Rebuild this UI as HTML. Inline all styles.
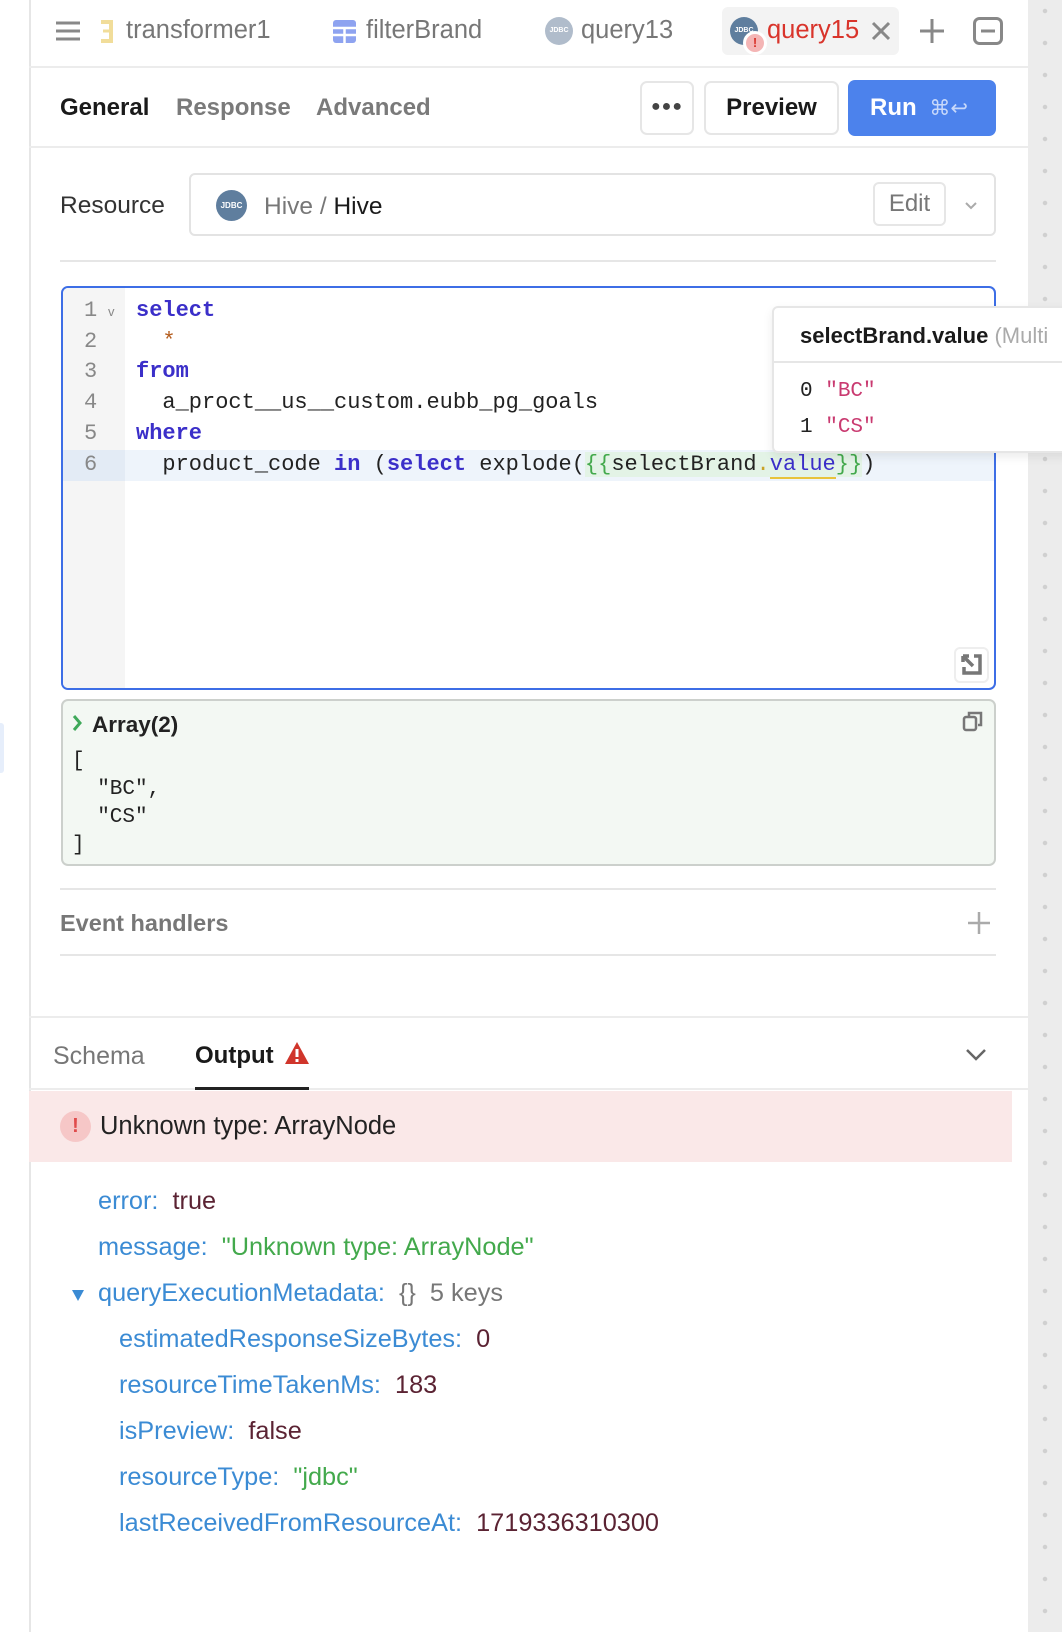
<!DOCTYPE html>
<html><head><meta charset="utf-8"><style>
*{box-sizing:border-box;margin:0;padding:0}
body{width:1062px;height:1632px;position:relative;background:#fff;font-family:"Liberation Sans",Arial,sans-serif;overflow:hidden;color:#222}
.a{position:absolute;white-space:nowrap}
.mono{font-family:"Liberation Mono",monospace;white-space:pre}
.strip{position:absolute;left:1028px;top:0;width:34px;height:1632px;background:#ececec;background-image:radial-gradient(circle,#d0d0d0 2px,transparent 2.5px);background-size:34px 32px;background-position:0 -5px}
.hl{position:absolute;left:29px;width:999px;height:2px;background:#ececec}
.kw{color:#3b2fc9;font-weight:bold}
.key{color:#3b8bd4}
.val{color:#5b2333}
.str{color:#43a94c}
.j{font-size:25.3px}
</style></head><body>
<div class="a" style="left:29px;top:0;width:2px;height:1632px;background:#e6e6e6"></div>
<div class="a" style="left:0;top:723px;width:4px;height:50px;background:#e6eefb;border-radius:0 3px 3px 0"></div>
<div class="strip"></div>

<!-- tab bar -->
<svg class="a" style="left:55px;top:20px" width="26" height="22"><g stroke="#888" stroke-width="3"><line x1="1" y1="3" x2="25" y2="3"/><line x1="1" y1="11" x2="25" y2="11"/><line x1="1" y1="19" x2="25" y2="19"/></g></svg>
<svg class="a" style="left:99px;top:19px" width="16" height="25"><path d="M2 3h10v19H2" fill="none" stroke="#f1dd9a" stroke-width="4"/><path d="M4 12h6" stroke="#f1dd9a" stroke-width="3"/></svg>
<div class="a" style="left:126px;top:16px;font-size:25.5px;color:#777">transformer1</div>
<svg class="a" style="left:332px;top:19px" width="25" height="25"><rect x="1" y="1" width="23" height="23" rx="3" fill="#8ea3f0"/><g stroke="#fff" stroke-width="2.5"><line x1="1" y1="9" x2="24" y2="9"/><line x1="1" y1="16" x2="24" y2="16"/><line x1="12.5" y1="9" x2="12.5" y2="24"/></g></svg>
<div class="a" style="left:366px;top:16px;font-size:25.5px;color:#777">filterBrand</div>
<div class="a" style="left:545px;top:17px;width:28px;height:28px;border-radius:50%;background:#b0bccb;color:#fff;font-size:7px;text-align:center;line-height:28px;font-weight:bold">JDBC</div>
<div class="a" style="left:581px;top:16px;font-size:25.5px;color:#777">query13</div>
<div class="a" style="left:722px;top:7px;width:177px;height:48px;background:#f3f3f3;border-radius:6px"></div>
<div class="a" style="left:730px;top:17px;width:28px;height:28px;border-radius:50%;background:#5f7e9e;color:#fff;font-size:7px;line-height:28px;text-align:center;font-weight:bold">JDBC</div>
<div class="a" style="left:743px;top:31px;width:24px;height:24px;border-radius:50%;background:#f4b5b5;border:3px solid #fff;color:#d9342b;font-size:13px;font-weight:bold;text-align:center;line-height:18px">!</div>
<div class="a" style="left:767px;top:16px;font-size:25.5px;color:#d9342b">query15</div>
<svg class="a" style="left:871px;top:21px" width="20" height="20"><g stroke="#888" stroke-width="3"><line x1="2" y1="2" x2="18" y2="18"/><line x1="18" y1="2" x2="2" y2="18"/></g></svg>
<svg class="a" style="left:919px;top:18px" width="26" height="26"><g stroke="#888" stroke-width="3"><line x1="13" y1="1" x2="13" y2="25"/><line x1="1" y1="13" x2="25" y2="13"/></g></svg>
<svg class="a" style="left:973px;top:17px" width="30" height="28"><rect x="1.5" y="1.5" width="27" height="25" rx="5" fill="none" stroke="#888" stroke-width="3"/><line x1="8" y1="14" x2="22" y2="14" stroke="#888" stroke-width="3"/></svg>
<div class="hl" style="top:66px"></div>

<!-- toolbar -->
<div class="a" style="left:60px;top:94px;font-size:24px;font-weight:bold;color:#1a1a1a">General</div>
<div class="a" style="left:176px;top:94px;font-size:24px;font-weight:bold;color:#7a7a7a">Response</div>
<div class="a" style="left:316px;top:94px;font-size:24px;font-weight:bold;color:#7a7a7a">Advanced</div>
<div class="a" style="left:640px;top:81px;width:54px;height:54px;border:2px solid #e6e6e6;border-radius:7px;text-align:center;line-height:48px;font-size:16px;color:#444;letter-spacing:1px">●●●</div>
<div class="a" style="left:704px;top:81px;width:135px;height:54px;border:2px solid #e6e6e6;border-radius:7px;text-align:center;line-height:50px;font-size:24px;font-weight:bold;color:#1a1a1a">Preview</div>
<div class="a" style="left:848px;top:80px;width:148px;height:56px;background:#4c82ec;border-radius:7px;color:#fff;font-size:24px;font-weight:bold;line-height:56px;padding-left:22px">Run <span style="color:#c7d8fa;font-weight:normal;font-size:21px;margin-left:6px">⌘↩</span></div>
<div class="hl" style="top:146px"></div>

<!-- resource -->
<div class="a" style="left:60px;top:192px;font-size:24.5px;color:#333">Resource</div>
<div class="a" style="left:189px;top:173px;width:807px;height:63px;border:2px solid #e3e3e3;border-radius:6px"></div>
<div class="a" style="left:216px;top:190px;width:31px;height:31px;border-radius:50%;background:#5f7e9e;color:#fff;font-size:8px;line-height:31px;text-align:center;font-weight:bold">JDBC</div>
<div class="a" style="left:264px;top:193px;font-size:24.5px;color:#777">Hive / <span style="color:#1a1a1a">Hive</span></div>
<div class="a" style="left:873px;top:182px;width:73px;height:44px;border:2px solid #e6e6e6;border-radius:6px;text-align:center;line-height:40px;font-size:24px;color:#777">Edit</div>
<svg class="a" style="left:964px;top:201px" width="14" height="10"><path d="M2 2l5 5 5-5" fill="none" stroke="#aaa" stroke-width="2"/></svg>
<div class="a" style="left:60px;top:260px;width:936px;height:2px;background:#e6e6e6"></div>

<!-- editor -->
<div class="a" style="left:61px;top:286px;width:935px;height:404px;border:2px solid #3d6ee6;border-radius:7px;overflow:hidden">
  <div class="a" style="left:0;top:0;width:62px;height:400px;background:#f5f5f5"></div>
  <div class="a" style="left:0;top:162px;width:931px;height:31px;background:#eef4fb"></div>
  <div class="a" style="left:0;top:162px;width:62px;height:31px;background:#e3ebf5"></div>
</div>
<div class="a mono" style="left:84px;top:296px;font-size:22px;line-height:30.7px;color:#888">1
2
3
4
5
6</div>
<div class="a" style="left:108px;top:304px;font-size:13px;color:#888">v</div>
<div class="a mono" style="left:136px;top:296px;font-size:22px;line-height:30.7px;color:#222"><span class="kw">select</span>
  <span style="color:#b35c1e">*</span>
<span class="kw">from</span>
  a_proct__us__custom.eubb_pg_goals
<span class="kw">where</span>
  product_code <span class="kw">in</span> (<span class="kw">select</span> explode(<span style="background:#e3f3e6"><span class="str">{{</span>selectBrand<span style="color:#c9a227">.</span><span style="color:#3b2fc9;border-bottom:2px solid #e8c33a">value</span><span class="str">}}</span></span>)</div>
<div class="a" style="left:954px;top:647px;width:35px;height:36px;border:2px solid #eee;border-radius:6px;background:#fff"></div>
<svg class="a" style="left:960px;top:653px" width="24" height="24"><path d="M14 3h6v17H4v-6" fill="none" stroke="#777" stroke-width="3.5"/><path d="M3 3l10 10M3 3h6M3 3v6" fill="none" stroke="#777" stroke-width="3.5"/></svg>

<!-- popup -->
<div class="a" style="left:772px;top:306px;width:300px;height:147px;background:#fff;border:2px solid #e6e6e6;border-radius:6px;box-shadow:0 4px 10px rgba(0,0,0,.08)"></div>
<div class="a" style="left:772px;top:361px;width:290px;height:2px;background:#e6e6e6"></div>
<div class="a" style="left:800px;top:323px;font-size:22px;font-weight:bold;color:#1a1a1a">selectBrand.value <span style="font-weight:normal;color:#aaa">(Multi</span></div>
<div class="a mono" style="left:800px;top:374px;font-size:21px;line-height:36px;color:#222">0 <span style="color:#c93a70">"BC"</span>
1 <span style="color:#c93a70">"CS"</span></div>

<!-- array box -->
<div class="a" style="left:61px;top:699px;width:935px;height:167px;background:#f3f8f3;border:2px solid #ccd0cc;border-radius:7px"></div>
<svg class="a" style="left:71px;top:714px" width="12" height="18"><path d="M3 2l6 7-6 7" fill="none" stroke="#3fa95a" stroke-width="3"/></svg>
<div class="a" style="left:92px;top:712px;font-size:22.5px;font-weight:bold;color:#222">Array(2)</div>
<svg class="a" style="left:962px;top:710px" width="22" height="22"><rect x="2" y="7" width="12" height="13" rx="2" fill="none" stroke="#777" stroke-width="2.5"/><path d="M7 6V3h12v12h-3" fill="none" stroke="#777" stroke-width="2.5"/></svg>
<div class="a mono" style="left:72px;top:748px;font-size:21px;line-height:28px;color:#222">[
  "BC",
  "CS"
]</div>

<!-- event handlers -->
<div class="a" style="left:60px;top:888px;width:936px;height:2px;background:#e6e6e6"></div>
<div class="a" style="left:60px;top:910px;font-size:23.5px;font-weight:bold;color:#777">Event handlers</div>
<svg class="a" style="left:967px;top:911px" width="24" height="24"><g stroke="#aaa" stroke-width="2.5"><line x1="12" y1="1" x2="12" y2="23"/><line x1="1" y1="12" x2="23" y2="12"/></g></svg>
<div class="a" style="left:60px;top:954px;width:936px;height:2px;background:#e6e6e6"></div>

<!-- bottom -->
<div class="hl" style="top:1016px"></div>
<div class="a" style="left:53px;top:1042px;font-size:25px;color:#777">Schema</div>
<div class="a" style="left:195px;top:1042px;font-size:24px;font-weight:bold;color:#1a1a1a">Output</div>
<svg class="a" style="left:284px;top:1041px" width="26" height="24"><path d="M13 1L25 23H1z" fill="#d0352b"/><rect x="11.5" y="8" width="3" height="8" fill="#fff"/><rect x="11.5" y="18" width="3" height="3" fill="#fff"/></svg>
<svg class="a" style="left:965px;top:1048px" width="22" height="14"><path d="M2 2l9 9 9-9" fill="none" stroke="#666" stroke-width="2.5"/></svg>
<div class="hl" style="top:1088px"></div>
<div class="a" style="left:195px;top:1087px;width:114px;height:3px;background:#222"></div>
<div class="a" style="left:29px;top:1091px;width:983px;height:71px;background:#fae8e8"></div>
<div class="a" style="left:60px;top:1111px;width:31px;height:31px;border-radius:50%;background:#f6c7c7;color:#e04b4b;text-align:center;line-height:31px;font-size:20px;font-weight:bold">!</div>
<div class="a" style="left:100px;top:1112px;font-size:25.5px;color:#222">Unknown type: ArrayNode</div>

<div class="a j" style="left:98px;top:1187px"><span class="key">error:</span>&nbsp; <span class="val">true</span></div>
<div class="a j" style="left:98px;top:1233px"><span class="key">message:</span>&nbsp; <span class="str">"Unknown type: ArrayNode"</span></div>
<svg class="a" style="left:71px;top:1288px" width="14" height="14"><path d="M1 2h12L7 13z" fill="#3b8bd4"/></svg>
<div class="a j" style="left:98px;top:1279px"><span class="key">queryExecutionMetadata:</span>&nbsp; <span style="color:#777">{}&nbsp; 5 keys</span></div>
<div class="a j" style="left:119px;top:1325px"><span class="key">estimatedResponseSizeBytes:</span>&nbsp; <span class="val">0</span></div>
<div class="a j" style="left:119px;top:1371px"><span class="key">resourceTimeTakenMs:</span>&nbsp; <span class="val">183</span></div>
<div class="a j" style="left:119px;top:1417px"><span class="key">isPreview:</span>&nbsp; <span class="val">false</span></div>
<div class="a j" style="left:119px;top:1463px"><span class="key">resourceType:</span>&nbsp; <span class="str">"jdbc"</span></div>
<div class="a j" style="left:119px;top:1509px"><span class="key">lastReceivedFromResourceAt:</span>&nbsp; <span class="val">1719336310300</span></div>
</body></html>
